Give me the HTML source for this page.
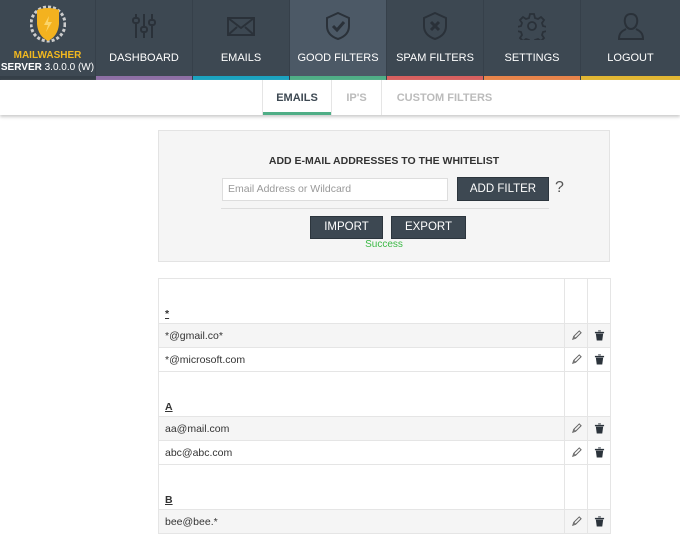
<!DOCTYPE html>
<html><head><style>
*{box-sizing:border-box;margin:0;padding:0}
body{width:680px;height:533px;overflow:hidden;background:#fff;font-family:"Liberation Sans",sans-serif;position:relative}
.nav{position:absolute;left:0;top:0;width:680px;height:80px;background:#3d4852}
.it{position:absolute;top:0;height:80px;border-right:1px solid #36404a;color:#fff;font-size:11px;text-align:center}
.it .lbl{position:absolute;top:52px;left:0;right:0}
.it .bar{position:absolute;bottom:0;left:0;right:0;height:4px}
.it svg{position:absolute;top:12px;left:50%;margin-left:-14px}
.sub{position:absolute;top:80px;left:0;width:680px;height:35px;background:#fff;box-shadow:0 2px 3px #ccc}
.tab{position:absolute;top:0;height:35px;line-height:36px;font-size:11px;font-weight:bold;color:#bbb;text-align:center;border-right:1px solid #e5e5e5}
.panel{position:absolute;left:158px;top:130px;width:452px;height:132px;background:#f5f5f5;border:1px solid #e3e3e3}
.btn{position:absolute;background:#3d4852;color:#fff;font-size:11.5px;text-align:center;border:1px solid #2c353d}
table{position:absolute;left:158px;top:278px;width:453px;border-collapse:collapse;font-size:10.5px;color:#333}
td{border:1px solid #e5e5e5;padding:0 6px;height:24px}
td.e,td.d{width:23px;padding:0;text-align:center}
td svg{display:block;margin:0 auto}
tr.g td{background:#f5f5f5}
tr.h td{height:45px;vertical-align:bottom;padding-bottom:3px;font-weight:bold;text-decoration:underline}
</style></head><body>
<div class="nav">
 <div class="it" style="left:0;width:96px;background:#3d4852">
  <svg width="36" height="40" viewBox="0 0 36 40" style="top:4px;margin-left:-18px"><circle cx="18" cy="20" r="17" fill="none" stroke="#ccc" stroke-width="3" stroke-dasharray="3 2"/><path d="M7 6 Q18 2 29 6 L29 20 Q28 32 18 37 Q8 32 7 20Z" fill="#f3b21f"/><path d="M19 12 L14 21 L18 21 L16 28 L22 18 L18 18Z" fill="#fbd56a"/></svg>
  <div style="position:absolute;top:50px;left:0;right:0;color:#f2b81f;font-weight:bold;font-size:10px">MAILWASHER</div>
  <div style="position:absolute;top:62px;left:0;right:0;font-size:10px"><b>SERVER</b> 3.0.0.0 (W)</div>
  <div class="bar" style="background:#353f48"></div>
 </div>
 <div class="it" style="left:96px;width:97px"><svg width="28" height="28" viewBox="0 0 28 28" fill="none" stroke="#2a3139" stroke-width="2"><path d="M6 2v24M14 2v24M22 2v24"/><rect x="3" y="6" width="6" height="5" rx="2" fill="#3d4852"/><rect x="11" y="15" width="6" height="5" rx="2" fill="#3d4852"/><rect x="19" y="8" width="6" height="5" rx="2" fill="#3d4852"/></svg><div class="lbl">DASHBOARD</div><div class="bar" style="background:#8e6fa5"></div></div>
 <div class="it" style="left:193px;width:97px"><svg width="28" height="28" viewBox="0 0 28 28" fill="none" stroke="#2a3139" stroke-width="2"><rect x="1" y="6" width="26" height="17"/><path d="M1 6l13 10 13-10M1 23l9-8M27 23l-9-8"/></svg><div class="lbl">EMAILS</div><div class="bar" style="background:#1ba3c0"></div></div>
 <div class="it" style="left:290px;width:97px;background:#4c5966"><svg width="28" height="28" viewBox="0 0 28 28" fill="none" stroke="#2a3139" stroke-width="2"><path d="M14 1l11 5v8c0 7-5 11-11 13C8 25 3 21 3 14V6z"/><path d="M9 14l4 4 7-8" stroke-width="3"/></svg><div class="lbl">GOOD FILTERS</div><div class="bar" style="background:#4fae86"></div></div>
 <div class="it" style="left:387px;width:97px"><svg width="28" height="28" viewBox="0 0 28 28" fill="none" stroke="#2a3139" stroke-width="2"><path d="M14 1l11 5v8c0 7-5 11-11 13C8 25 3 21 3 14V6z"/><path d="M10 10l8 8M18 10l-8 8" stroke-width="3"/></svg><div class="lbl">SPAM FILTERS</div><div class="bar" style="background:#d8605f"></div></div>
 <div class="it" style="left:484px;width:97px"><svg width="28" height="28" viewBox="0 0 28 28" fill="none" stroke="#2a3139" stroke-width="1.8"><circle cx="14" cy="14" r="4"/><path d="M12 2h4l1 4 3 1 3-2 3 3-2 3 1 3 4 1v4l-4 1-1 3 2 3-3 3-3-2-3 1-1 4h-4l-1-4-3-1-3 2-3-3 2-3-1-3-4-1v-4l4-1 1-3-2-3 3-3 3 2 3-1z"/></svg><div class="lbl">SETTINGS</div><div class="bar" style="background:#e9844a"></div></div>
 <div class="it" style="left:581px;width:99px;border-right:none"><svg width="28" height="28" viewBox="0 0 28 28" fill="none" stroke="#2a3139" stroke-width="2"><path d="M14 2c-5 0-7 4-6 9 1 4 3 6 6 6s5-2 6-6c1-5-1-9-6-9z"/><path d="M9 17c-4 2-7 4-7 10h24c0-6-3-8-7-10"/></svg><div class="lbl">LOGOUT</div><div class="bar" style="background:#e2b632"></div></div>
</div>
<div class="sub">
 <div class="tab" style="left:262px;width:70px;color:#3d4852;border-left:1px solid #e5e5e5">EMAILS<div style="position:absolute;left:0;right:0;bottom:0;height:3px;background:#4fae86"></div></div>
 <div class="tab" style="left:332px;width:50px">IP'S</div>
 <div class="tab" style="left:382px;width:125px;border-right:none">CUSTOM FILTERS</div>
</div>
<div class="panel">
 <div style="position:absolute;top:24px;left:0;right:0;text-align:center;font-weight:bold;font-size:10.5px;color:#333">ADD E-MAIL ADDRESSES TO THE WHITELIST</div>
 <div style="position:absolute;left:63px;top:47px;width:226px;height:23px;background:#fff;border:1px solid #ddd;font-size:10.5px;color:#999;line-height:21px;padding-left:5px">Email Address or Wildcard</div>
 <div class="btn" style="left:298px;top:46px;width:92px;height:24px;line-height:22px">ADD FILTER</div>
 <div style="position:absolute;left:396px;top:48px;font-size:16px;color:#555">?</div>
 <div style="position:absolute;left:62px;top:77px;width:328px;height:1px;background:#ddd"></div>
 <div class="btn" style="left:151px;top:85px;width:73px;height:23px;line-height:21px">IMPORT</div>
 <div class="btn" style="left:232px;top:85px;width:75px;height:23px;line-height:21px">EXPORT</div>
 <div style="position:absolute;top:108px;left:0;right:0;text-align:center;color:#3cb946;font-size:10px">Success</div>
</div>
<svg width="0" height="0" style="position:absolute"><defs>
<symbol id="pen" viewBox="0 0 12 12"><path d="M2 10l1-3 6-6 2 2-6 6z M3 7l2 2" fill="none" stroke="#666" stroke-width="1.1"/></symbol>
<symbol id="bin" viewBox="0 0 12 12"><path d="M1 2h10v1.5H1z M2 4h8l-1 7.5H3z" fill="#2b333b"/><path d="M4.5 1h3" stroke="#2b333b"/></symbol>
</defs></svg>
<table>
<tr class="h"><td>*</td><td class="e"></td><td class="d"></td></tr>
<tr class="g"><td>*@gmail.co*</td><td class="e"><svg width="11" height="11"><use href="#pen"/></svg></td><td class="d"><svg width="11" height="11"><use href="#bin"/></svg></td></tr>
<tr><td>*@microsoft.com</td><td class="e"><svg width="11" height="11"><use href="#pen"/></svg></td><td class="d"><svg width="11" height="11"><use href="#bin"/></svg></td></tr>
<tr class="h"><td>A</td><td class="e"></td><td class="d"></td></tr>
<tr class="g"><td>aa@mail.com</td><td class="e"><svg width="11" height="11"><use href="#pen"/></svg></td><td class="d"><svg width="11" height="11"><use href="#bin"/></svg></td></tr>
<tr><td>abc@abc.com</td><td class="e"><svg width="11" height="11"><use href="#pen"/></svg></td><td class="d"><svg width="11" height="11"><use href="#bin"/></svg></td></tr>
<tr class="h"><td>B</td><td class="e"></td><td class="d"></td></tr>
<tr class="g"><td>bee@bee.*</td><td class="e"><svg width="11" height="11"><use href="#pen"/></svg></td><td class="d"><svg width="11" height="11"><use href="#bin"/></svg></td></tr>
</table>
</body></html>
